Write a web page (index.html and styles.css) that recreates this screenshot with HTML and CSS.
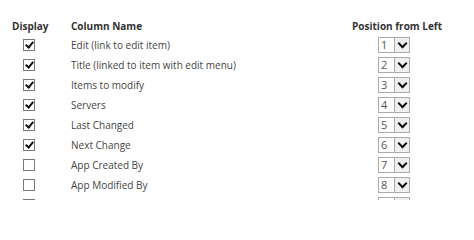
FILE: index.html
```html
<!DOCTYPE html>
<html>
<head>
<meta charset="utf-8">
<link rel="stylesheet" href="styles.css">
</head>
<body>
<div class="table">
  <div class="row head">
    <div class="c-disp">Display</div>
    <div class="c-name">Column Name</div>
    <div class="c-pos">Position from Left</div>
  </div>
  <div class="row"><div class="c-disp"><span class="cb on"></span></div><div class="c-name">Edit (link to edit item)</div><div class="c-pos"><span class="sel"><span class="num">1</span><span class="arr"></span></span></div></div>
  <div class="row"><div class="c-disp"><span class="cb on"></span></div><div class="c-name">Title (linked to item with edit menu)</div><div class="c-pos"><span class="sel"><span class="num">2</span><span class="arr"></span></span></div></div>
  <div class="row"><div class="c-disp"><span class="cb on"></span></div><div class="c-name">Items to modify</div><div class="c-pos"><span class="sel"><span class="num">3</span><span class="arr"></span></span></div></div>
  <div class="row"><div class="c-disp"><span class="cb on"></span></div><div class="c-name">Servers</div><div class="c-pos"><span class="sel"><span class="num">4</span><span class="arr"></span></span></div></div>
  <div class="row"><div class="c-disp"><span class="cb on"></span></div><div class="c-name">Last Changed</div><div class="c-pos"><span class="sel"><span class="num">5</span><span class="arr"></span></span></div></div>
  <div class="row"><div class="c-disp"><span class="cb on"></span></div><div class="c-name">Next Change</div><div class="c-pos"><span class="sel"><span class="num">6</span><span class="arr"></span></span></div></div>
  <div class="row"><div class="c-disp"><span class="cb"></span></div><div class="c-name">App Created By</div><div class="c-pos"><span class="sel"><span class="num">7</span><span class="arr"></span></span></div></div>
  <div class="row"><div class="c-disp"><span class="cb"></span></div><div class="c-name">App Modified By</div><div class="c-pos"><span class="sel"><span class="num">8</span><span class="arr"></span></span></div></div>
  <div class="row"><div class="c-disp"><span class="cb"></span></div><div class="c-name"></div><div class="c-pos"><span class="sel"><span class="num">9</span><span class="arr"></span></span></div></div>
</div>
</body>
</html>
```
FILE: styles.css
```css
html, body {
  margin: 0;
  padding: 0;
  background: #fff;
  overflow: hidden;
  height: 200px;
}
body {
  font-family: "Open Sans", "Noto Sans", sans-serif;
  font-size: 10px;
  color: #444;
}
.table {
  padding-top: 17px;
}
.row {
  display: grid;
  grid-template-columns: 58px 294px 122px;
  align-items: center;
  height: 20px;
}
.row.head {
  height: 18px;
  font-weight: 700;
  color: #333;
}
.c-disp {
  display: flex;
  justify-content: center;
}
.head .c-disp {
  justify-content: flex-start;
  padding-left: 12px;
}
.c-name {
  padding-left: 13px;
  white-space: nowrap;
}
.c-pos {
  padding-left: 26px;
}
.head .c-pos {
  padding-left: 0;
}
.cb {
  display: block;
  width: 10px;
  height: 10px;
  border: 1px solid #7a7a7a;
  background: #fff;
  margin-left: -1px;
  position: relative;
}
.cb.on::after {
  content: "";
  position: absolute;
  left: 3px;
  top: 0px;
  width: 3px;
  height: 6px;
  border: solid #111;
  border-width: 0 2px 2px 0;
  transform: rotate(40deg);
}
.sel {
  display: flex;
  width: 32px;
  height: 16px;
  box-sizing: border-box;
  border: 1px solid #ababab;
  background: #fff;
}
.num {
  flex: 1;
  font-size: 11px;
  line-height: 14px;
  padding-left: 2px;
  color: #555;
}
.arr {
  width: 15px;
  height: 14px;
  background: #f0f0f0;
  border-left: 1px solid #ababab;
  box-sizing: border-box;
  position: relative;
}
.arr::after {
  content: "";
  position: absolute;
  left: 4px;
  top: 2px;
  width: 5px;
  height: 5px;
  border: solid #111;
  border-width: 0 2px 2px 0;
  transform: rotate(45deg);
}
```
